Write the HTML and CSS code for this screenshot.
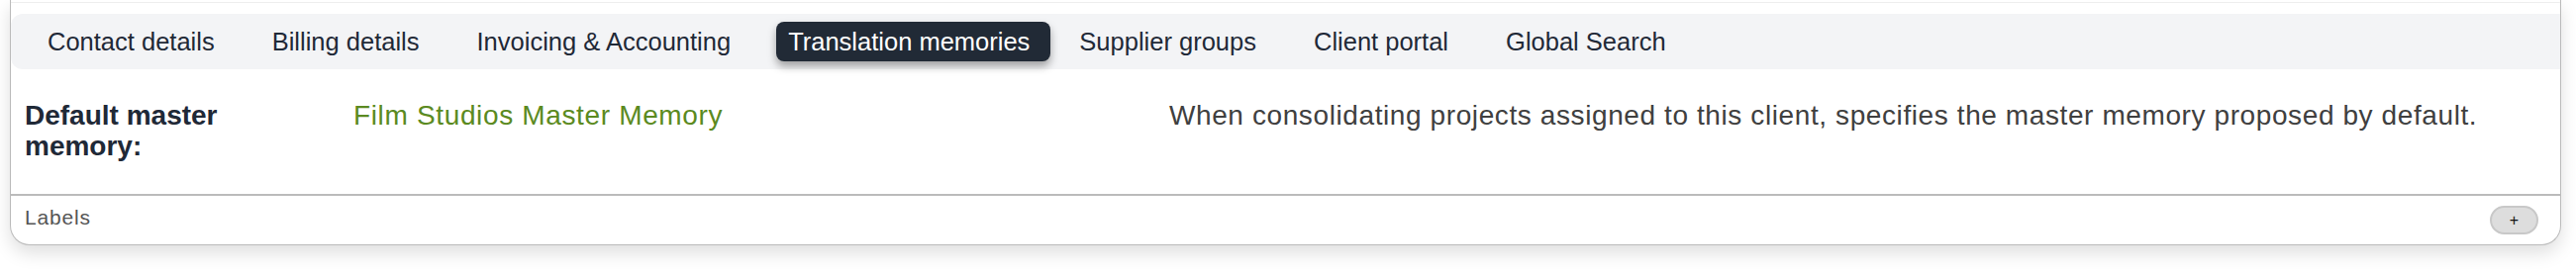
FILE: index.html
```html
<!DOCTYPE html>
<html lang="en">
<head>
    <meta charset="UTF-8">
    <meta name="viewport" content="width=device-width, initial-scale=1.0">
    <title>Client - Translation memories</title>
    <link rel="stylesheet" href="styles.css">
</head>
<body>
    <div class="page">
        <div class="card">
            <div class="card-head"></div>

            <!-- Tabs -->
            <nav class="tabs">
                <a class="tab">Contact details</a>
                <a class="tab">Billing details</a>
                <a class="tab">Invoicing &amp; Accounting</a>
                <a class="tab active">Translation memories</a>
                <a class="tab">Supplier groups</a>
                <a class="tab">Client portal</a>
                <a class="tab">Global Search</a>
            </nav>

            <!-- Master memory -->
            <div class="field-row">
                <div class="field-label">Default master memory:</div>
                <div class="field-value">Film Studios Master Memory</div>
                <div class="field-help">When consolidating projects assigned to this client, specifies the master memory proposed by default.</div>
            </div>

            <div class="labels-row">
                <span class="labels-title">Labels</span>
                <button class="add-btn">+</button>
            </div>
        </div>
    </div>
</body>
</html>
```

FILE: styles.css
```css
body {
    margin: 0;
    background-color: #fff;
    font-family: "Liberation Sans", Arial, sans-serif;
    color: #1f2937;
}

.page {
    padding: 0 15px 0 10px;
    height: 277px;
    overflow: hidden;
}

.card {
    background-color: #fff;
    border: 1px solid #bbb;
    border-top: none;
    border-radius: 0 0 20px 20px;
    box-shadow: 0 8px 18px rgba(0, 0, 0, 0.13);
}

.card-head {
    height: 2px;
    border-bottom: 1px solid #eee;
}

/* Tabs */
.tabs {
    display: flex;
    align-items: center;
    gap: 17px;
    height: 56px;
    margin-top: 11px;
    padding-left: 25px;
    background-color: #f3f4f6;
    border-radius: 12px 0 0 12px;
}

.tab {
    display: block;
    height: 40px;
    line-height: 40px;
    padding: 0 29px 0 12px;
    font-size: 25.5px;
    color: #1f2937;
    border-radius: 8px;
    white-space: nowrap;
    cursor: pointer;
}

.tab.active {
    padding-right: 21px;
    background-color: #212a36;
    color: #fff;
    box-shadow: 0 5px 8px rgba(0, 0, 0, 0.35);
}

/* Field row */
.field-row {
    display: grid;
    grid-template-columns: 332px 824px 1fr;
    padding: 31px 14px 0 14px;
    height: 95px;
    border-bottom: 2px solid #bbb;
}

.field-label {
    font-size: 28px;
    line-height: 31px;
    font-weight: bold;
    color: #1f2937;
    width: 240px;
}

.field-value {
    font-size: 28px;
    line-height: 31px;
    letter-spacing: 0.65px;
    color: #5b8a21;
    white-space: nowrap;
}

.field-help {
    font-size: 28px;
    line-height: 31px;
    letter-spacing: 0.6px;
    color: #404040;
    white-space: nowrap;
}

/* Labels */
.labels-row {
    display: flex;
    align-items: center;
    justify-content: space-between;
    height: 49px;
    padding: 0 22px 0 14px;
}

.labels-title {
    margin-bottom: 5px;
    font-size: 21px;
    letter-spacing: 0.8px;
    color: #555;
}

.add-btn {
    width: 49px;
    height: 29px;
    border: 2px solid #c8c8c8;
    border-radius: 15px;
    background-color: #ddd;
    font-size: 16px;
    line-height: 1;
    color: #111;
    padding: 0;
    cursor: pointer;
}
```
